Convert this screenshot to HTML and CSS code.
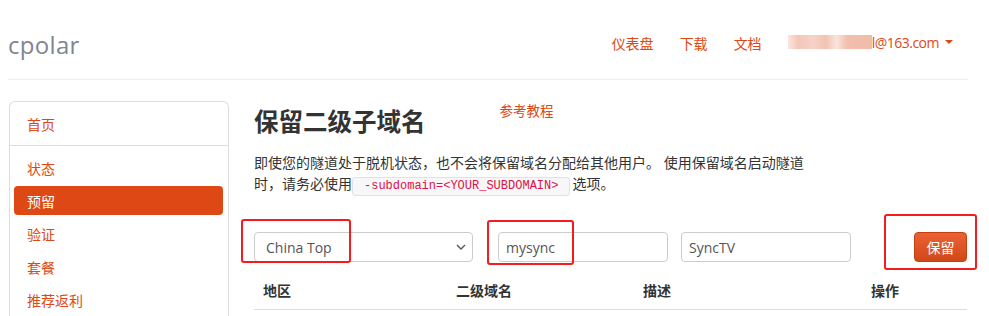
FILE: index.html
```html
<!DOCTYPE html>
<html lang="zh-CN">
<head>
  <meta charset="UTF-8" />
  <title>cpolar - 保留二级子域名</title>
  <link rel="stylesheet" href="styles.css">
</head>
<body>
  <div class="page">
    <div class="navbar">
      <a class="brand">cpolar</a>
      <ul class="nav">
        <li><a>仪表盘</a></li>
        <li><a>下载</a></li>
        <li><a>文档</a></li>
        <li><a class="user"><span class="blur"></span><span class="mail">l@163.com</span><span class="caret"></span></a></li>
      </ul>
    </div>

    <div class="layout">
      <div class="sidebar">
        <div class="side-home"><a>首页</a></div>
        <ul class="side-list">
          <li><a>状态</a></li>
          <li class="active"><a>预留</a></li>
          <li><a>验证</a></li>
          <li><a>套餐</a></li>
          <li><a>推荐返利</a></li>
        </ul>
      </div>

      <div class="main">
        <div class="title-row">
          <h1>保留二级子域名</h1>
          <a class="ref">参考教程</a>
        </div>
        <p class="intro">即使您的隧道处于脱机状态，也不会将保留域名分配给其他用户。 使用保留域名启动隧道时，请务必使用<code>-subdomain=&lt;YOUR_SUBDOMAIN&gt;</code>选项。</p>

        <div class="form-row">
          <div class="select">
            <span>China Top</span>
            <svg width="10" height="6" viewBox="0 0 10 6"><path d="M1 1l4 4 4-4" fill="none" stroke="#555" stroke-width="1.4"/></svg>
          </div>
          <input class="field sub" type="text" value="mysync" />
          <input class="field desc" type="text" value="SyncTV" />
          <button class="btn">保留</button>

          <div class="mark mark-select"></div>
          <div class="mark mark-sub"></div>
          <div class="mark mark-btn"></div>
        </div>

        <table class="list">
          <thead>
            <tr>
              <th class="c1">地区</th>
              <th class="c2">二级域名</th>
              <th class="c3">描述</th>
              <th>操作</th>
            </tr>
          </thead>
        </table>
      </div>
    </div>
  </div>
</body>
</html>
```

FILE: styles.css
```css
body {
  margin: 0;
  font-family: "Open Sans", "Noto Sans CJK SC", sans-serif;
  font-size: 14px;
  color: #333;
  background: #fff;
}
a {
  color: #dd4814;
  text-decoration: none;
}
.page {
  width: 960px;
  margin-left: 8px;
}
.navbar {
  height: 79px;
  border-bottom: 1px solid #eee;
  display: flex;
  align-items: center;
  justify-content: space-between;
}
.brand {
  font-size: 24px;
  color: #80878f;
  margin-top: 10px;
  letter-spacing: 0.3px;
}
.nav {
  list-style: none;
  margin: 6px 15px 0 0;
  padding: 0;
  display: flex;
  gap: 26px;
}
.nav a {
  font-size: 14px;
}
.user {
  display: flex;
  align-items: center;
}
.blur {
  display: inline-block;
  width: 84px;
  height: 14px;
  background: linear-gradient(to right, #fbe6df 0, #f4c6b7 12%, #f6d3c7 30%, #f3c2b2 45%, #fae4dc 58%, #f2bfae 70%, #f1bba8 100%);
}
.mail {
  letter-spacing: -0.5px;
}
.caret {
  display: inline-block;
  width: 0;
  height: 0;
  margin-left: 6px;
  border-left: 4px solid transparent;
  border-right: 4px solid transparent;
  border-top: 4px solid #dd4814;
}

.layout {
  display: flex;
  margin-top: 21px;
}
.sidebar {
  width: 218px;
  margin-left: 1px;
  border: 1px solid #ddd;
  border-bottom: none;
  border-radius: 6px 6px 0 0;
  height: 230px;
  flex-shrink: 0;
}
.side-home {
  height: 43px;
  border-bottom: 1px solid #ddd;
  display: flex;
  align-items: center;
  padding-left: 17px;
}
.side-list {
  list-style: none;
  margin: 0;
  padding: 7px 5px 0 4px;
}
.side-list li {
  height: 29px;
  margin-bottom: 4px;
  display: flex;
  align-items: center;
  padding-left: 13px;
  border-radius: 4px;
}
.side-list li.active {
  background: #dd4814;
}
.side-list li.active a {
  color: #fff;
}

.main {
  margin-left: 25px;
  flex: 1;
}
.title-row {
  display: flex;
  align-items: flex-start;
}
h1 {
  margin: 4px 0 0;
  font-size: 24.5px;
  line-height: 34px;
  font-weight: bold;
  color: #333;
}
.ref {
  margin-left: 74px;
  font-size: 13.5px;
  line-height: 20px;
}
.intro {
  width: 560px;
  margin: 13px 0 0;
  line-height: 21px;
}
code {
  display: inline-block;
  font-family: "Liberation Mono", monospace;
  font-size: 12px;
  line-height: 17px;
  color: #dd1144;
  background: #f7f7f9;
  border: 1px solid #e1e1e8;
  border-radius: 3px;
  padding: 0 11px;
  margin: 0 2px 0 0;
  vertical-align: 0;
}

.form-row {
  position: relative;
  display: flex;
  align-items: center;
  margin-top: 36px;
  height: 30px;
}
.select {
  width: 200px;
  height: 28px;
  border: 1px solid #ccc;
  border-radius: 4px;
  padding: 0 6px 0 11px;
  display: flex;
  align-items: center;
  justify-content: space-between;
  color: #555;
}
.field {
  box-sizing: border-box;
  height: 30px;
  width: 170px;
  border: 1px solid #ccc;
  border-radius: 4px;
  padding: 0 7px;
  font-family: "Open Sans", sans-serif;
  font-size: 14px;
  color: #555;
}
.sub {
  margin-left: 25px;
}
.desc {
  margin-left: 13px;
}
.btn {
  margin-left: 63px;
  width: 53px;
  height: 30px;
  border: 1px solid #c54011;
  border-radius: 4px;
  background: linear-gradient(#ea6233, #d1491a);
  color: #fff;
  font-family: "Noto Sans CJK SC", sans-serif;
  font-size: 14px;
  padding: 0;
}
.mark {
  position: absolute;
  border: 2px solid #f41c1c;
  border-radius: 3px;
}
.mark-select {
  left: -13px;
  top: -13px;
  width: 106px;
  height: 40px;
}
.mark-sub {
  left: 233px;
  top: -12px;
  width: 83px;
  height: 41px;
}
.mark-btn {
  left: 630px;
  top: -18px;
  width: 89px;
  height: 52px;
}

.list {
  width: 713px;
  border-collapse: collapse;
  margin-top: 11px;
}
.list th {
  text-align: left;
  font-weight: bold;
  padding: 8px 9px;
  line-height: 20px;
  border-bottom: 1px solid #ddd;
}
.list .c1 { width: 175px; }
.list .c2 { width: 169px; }
.list .c3 { width: 210px; }
```
